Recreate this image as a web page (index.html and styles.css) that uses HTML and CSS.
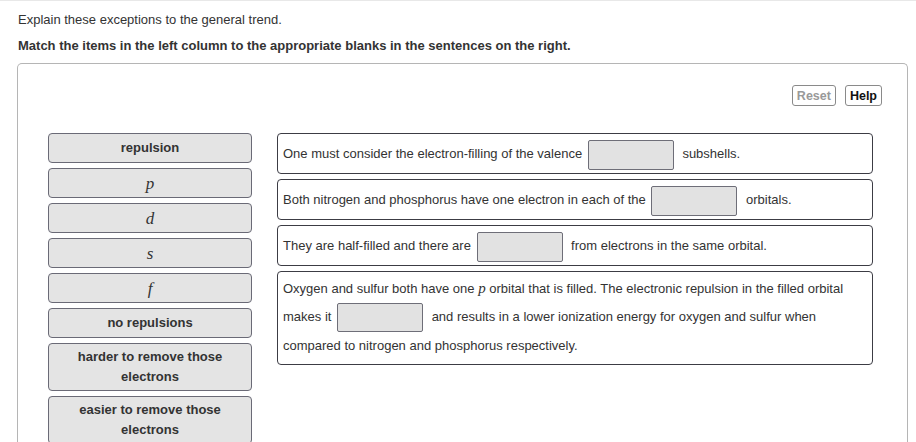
FILE: index.html
```html
<!DOCTYPE html>
<html>
<head>
<meta charset="utf-8">
<link rel="stylesheet" href="styles.css">
</head>
<body>
<div class="intro">
  <p class="q">Explain these exceptions to the general trend.</p>
  <p class="instr">Match the items in the left column to the appropriate blanks in the sentences on the right.</p>
</div>
<div class="panel">
  <div class="toolbar">
    <button class="btn reset">Reset</button>
    <button class="btn help">Help</button>
  </div>
  <div class="main">
    <div class="items">
      <div class="item">repulsion</div>
      <div class="item"><span class="math">p</span></div>
      <div class="item"><span class="math">d</span></div>
      <div class="item"><span class="math">s</span></div>
      <div class="item"><span class="math">f</span></div>
      <div class="item">no repulsions</div>
      <div class="item tall">harder to remove those<br>electrons</div>
      <div class="item tall">easier to remove those<br>electrons</div>
    </div>
    <div class="sentences">
      <div class="sentence">One must consider the electron-filling of the valence <span class="blank"></span> subshells.</div>
      <div class="sentence">Both nitrogen and phosphorus have one electron in each of the <span class="blank"></span> orbitals.</div>
      <div class="sentence">They are half-filled and there are <span class="blank"></span> from electrons in the same orbital.</div>
      <div class="sentence multi">Oxygen and sulfur both have one <span class="math inline">p</span> orbital that is filled. The electronic repulsion in the filled orbital makes it <span class="blank"></span> and results in a lower ionization energy for oxygen and sulfur when compared to nitrogen and phosphorus respectively.</div>
    </div>
  </div>
</div>
</body>
</html>
```
FILE: styles.css
```css
html, body {
  margin: 0;
  padding: 0;
  background: #fff;
  height: 100%;
  overflow: hidden;
}
body {
  font-family: "Liberation Sans", Arial, sans-serif;
  color: #333;
  border-top: 1px solid #e8e8e8;
  box-sizing: border-box;
}
.intro {
  padding: 11px 18px 0 18px;
}
.q {
  margin: 0;
  font-size: 13px;
  line-height: 16px;
}
.instr {
  margin: 10px 0 0 0;
  font-size: 13px;
  line-height: 16px;
  font-weight: bold;
}
.panel {
  margin: 9px 0 0 17px;
  width: 891px;
  box-sizing: border-box;
  border: 1px solid #b5b5b5;
  border-bottom: none;
  border-radius: 5px 5px 0 0;
  padding: 21px 25px 0 30px;
  height: 400px;
}
.toolbar {
  display: flex;
  justify-content: flex-end;
  gap: 9px;
}
.btn {
  font-family: "Liberation Sans", Arial, sans-serif;
  font-size: 12.5px;
  font-weight: bold;
  height: 21px;
  padding: 0 4px;
  background: #fff;
  border: 1px solid #8a8a8a;
  border-radius: 3px;
  line-height: 18px;
}
.reset { color: #999; }
.help { color: #111; }
.main {
  display: flex;
  gap: 25px;
  margin-top: 27px;
}
.items {
  width: 204px;
  display: flex;
  flex-direction: column;
  gap: 5px;
}
.item {
  box-sizing: border-box;
  height: 30px;
  border: 1.5px solid #6a6a76;
  border-radius: 4px;
  background: #e4e4e4;
  font-size: 13px;
  font-weight: bold;
  color: #333;
  text-align: center;
  display: flex;
  align-items: center;
  justify-content: center;
  line-height: 20px;
}
.item.tall {
  height: 48px;
}
.math {
  font-family: "Liberation Serif", "Times New Roman", serif;
  font-style: italic;
  font-weight: normal;
  font-size: 17px;
  line-height: 1;
}
.math.inline {
  font-size: 15px;
  line-height: inherit;
}
.sentences {
  width: 596px;
  display: flex;
  flex-direction: column;
  gap: 5px;
}
.sentence {
  box-sizing: border-box;
  border: 1.5px solid #3c3c44;
  border-radius: 4px;
  padding: 4px 10px 4px 5px;
  font-size: 13px;
  color: #333;
  line-height: 31px;
  height: 41px;
}
.sentence.multi {
  line-height: 28px;
  height: auto;
  padding: 2px 22px 4px 5px;
}
.blank {
  display: inline-block;
  vertical-align: middle;
  box-sizing: border-box;
  width: 86px;
  height: 30px;
  background: #e2e2e2;
  border: 1.5px solid #6e6e78;
  border-radius: 2px;
  margin: 0 5px 0 2px;
}
.sentence.multi .blank {
  height: 29px;
}
```
